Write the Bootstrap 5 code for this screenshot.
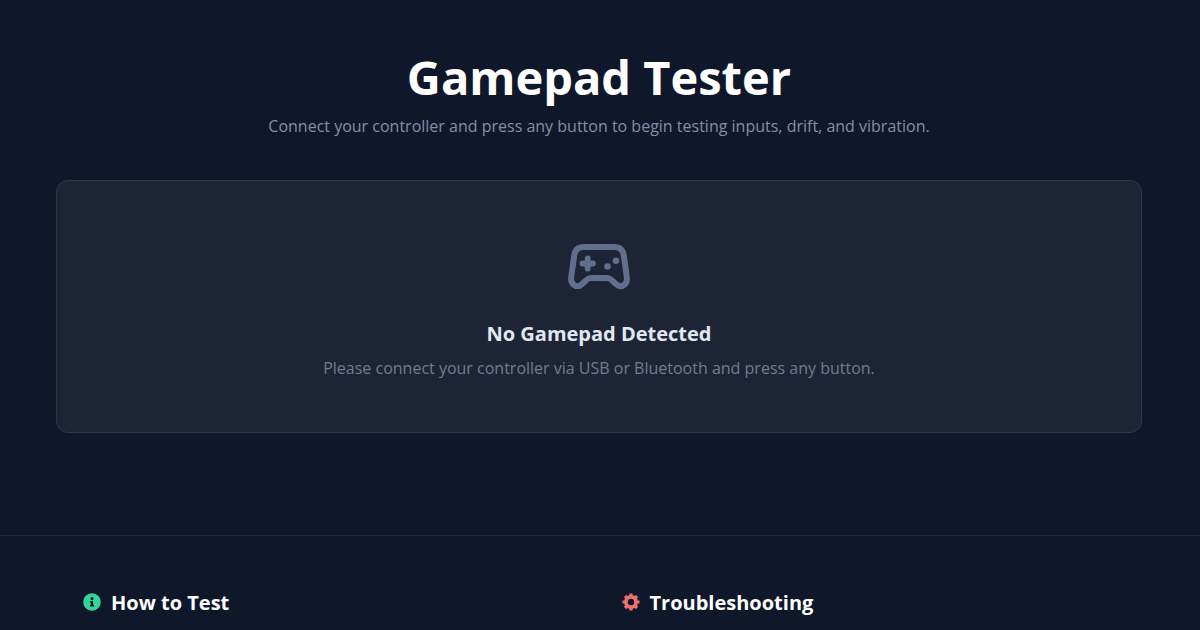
<!DOCTYPE html>
<html lang="en">
<head>
<meta charset="utf-8">
<meta name="viewport" content="width=device-width, initial-scale=1">
<title>Gamepad Tester</title>
<link href="https://cdn.jsdelivr.net/npm/bootstrap@5.3.0/dist/css/bootstrap.min.css" rel="stylesheet">
<style>
  body { background: #0f172a; color: #fff; font-family: "Segoe UI", "Open Sans", "Noto Sans", sans-serif; overflow-x: hidden; }
  .page-main { padding: 48px 58px 102px 56px; }
  .page-title { font-size: 47px; line-height: 58px; font-weight: 700; }
  .page-lead { font-size: 16px; line-height: 24px; color: #8291a9; margin-top: 8px; }
  .status-card { background: #1c2436; border: 1px solid #2d374a; border-radius: 12px; margin-top: 42px; padding: 53px 24px 52px; }
  .status-title { font-size: 20px; line-height: 28px; font-weight: 700; color: #e2e8f0; margin-top: 20px; }
  .status-text { font-size: 16px; line-height: 24px; color: #727d91; margin-top: 8px; }
  .pad-icon { color: #5f6f8c; }
  .help { border-top: 1px solid #1d273a; padding: 52px 40px 40px 83px; }
  .help-title { font-size: 20px; line-height: 30px; font-weight: 700; gap: 10px; }
  .help-title svg { margin-bottom: 2px; }
  .text-info-green { color: #34d399; }
  .text-gear-red { color: #f07070; }
</style>
</head>
<body>
<main class="page-main text-center">
  <header>
    <h1 class="page-title mb-0">Gamepad Tester</h1>
    <p class="page-lead mb-0">Connect your controller and press any button to begin testing inputs, drift, and vibration.</p>
  </header>
  <section class="status-card">
    <svg class="pad-icon d-block mx-auto" width="66" height="66" viewBox="0 0 66 66" fill="none" stroke="currentColor" stroke-width="6" stroke-linejoin="round" stroke-linecap="round" aria-hidden="true">
      <path d="M18 13H48C54 13 57 16 57.800 21.500L60.800 43C61.800 51 55 54.500 50.500 50.500L45.500 46Q43.500 44 41 44H25Q22.500 44 20.500 46L15.500 50.500C11 54.500 4.200 51 5.200 43L8.200 21.500C9 16 12 13 18 13Z"/>
      <path d="M16.500 29.500H27M21.700 24.300V34.700" stroke-width="5.800"/>
      <g fill="currentColor" stroke="none"><circle cx="41.500" cy="32.500" r="3.300"/><circle cx="50" cy="26.700" r="3.300"/></g>
    </svg>
    <h2 class="status-title mb-0">No Gamepad Detected</h2>
    <p class="status-text mb-0">Please connect your controller via USB or Bluetooth and press any button.</p>
  </section>
</main>
<footer class="help">
  <div class="row g-0">
    <div class="col-6">
      <h2 class="help-title d-flex align-items-center mb-0">
        <svg class="text-info-green" width="18" height="18" viewBox="0 0 512 512" fill="currentColor" aria-hidden="true"><path d="M256 8C119 8 8 119 8 256s111 248 248 248 248-111 248-248S393 8 256 8zm0 110a42 42 0 1 1 0 84 42 42 0 0 1 0-84zm56 254a12 12 0 0 1-12 12h-88a12 12 0 0 1-12-12v-24a12 12 0 0 1 12-12h12v-64h-12a12 12 0 0 1-12-12v-24a12 12 0 0 1 12-12h64a12 12 0 0 1 12 12v100h12a12 12 0 0 1 12 12z"/></svg>
        How to Test
      </h2>
    </div>
    <div class="col-6">
      <h2 class="help-title d-flex align-items-center mb-0">
        <svg class="text-gear-red" width="18" height="18" viewBox="0 0 18 18" aria-hidden="true"><g fill="none" stroke="currentColor"><circle cx="9" cy="9" r="5.100" stroke-width="3.800"/><path stroke-width="3.200" d="M9 .5V3M9 15V17.500M.5 9H3M15 9H17.500M3 3L4.800 4.800M13.200 13.200L15 15M3 15L4.800 13.200M13.200 4.800L15 3"/></g></svg>
        Troubleshooting
      </h2>
    </div>
  </div>
</footer>
<script src="https://cdn.jsdelivr.net/npm/bootstrap@5.3.0/dist/js/bootstrap.bundle.min.js"></script>
</body>
</html>
